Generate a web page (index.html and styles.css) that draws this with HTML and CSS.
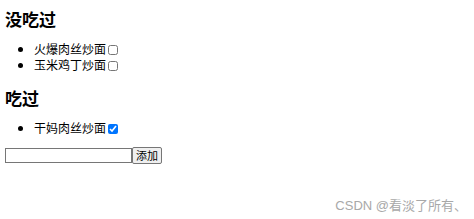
FILE: index.html
```html
<!DOCTYPE html>
<html>
<head>
<meta charset="utf-8">
<link rel="stylesheet" href="styles.css">
</head>
<body>
<div class="page">
  <h2 class="title">没吃过</h2>
  <ul class="list">
    <li>火爆肉丝炒面<input type="checkbox" class="check"></li>
    <li>玉米鸡丁炒面<input type="checkbox" class="check"></li>
  </ul>
  <h2 class="title second">吃过</h2>
  <ul class="list">
    <li>干妈肉丝炒面<input type="checkbox" class="check" checked></li>
  </ul>
  <div class="form">
    <input type="text" class="field"><button class="btn">添加</button>
  </div>
</div>
<div class="watermark">CSDN @看淡了所有、</div>
</body>
</html>
```
FILE: styles.css
```css
html, body {
  margin: 0;
  padding: 0;
  background: #fff;
}
body {
  width: 474px;
  height: 219px;
  position: relative;
  overflow: hidden;
  font-family: "Noto Sans CJK SC", "Noto Sans", sans-serif;
  color: #000;
  font-size: 12px;
}
.page {
  padding: 8px 5px 0;
}
.title {
  font-size: 17px;
  line-height: 22px;
  font-weight: bold;
  margin: 0;
}
.title.second {
  margin-top: 14px;
}
.list {
  margin: 11px 0 0;
  padding-left: 29px;
  list-style: disc;
}
.list li {
  line-height: 16px;
  height: 16px;
}
.check {
  width: 10px;
  height: 10px;
  margin: 0 0 0 2px;
  vertical-align: -1px;
}
.form {
  margin-top: 11px;
  display: flex;
  align-items: center;
}
.field {
  width: 127px;
  height: 15px;
  box-sizing: border-box;
  border: 1px solid #767676;
  margin: 0;
  padding: 0 2px;
  font-size: 12px;
}
.btn {
  height: 17px;
  box-sizing: border-box;
  margin: 0;
  padding: 0 3px;
  font-size: 11px;
  font-family: "Noto Sans CJK SC", sans-serif;
  line-height: 13px;
  border: 1px solid #767676;
  background: #efefef;
  border-radius: 2px;
  color: #000;
}
.watermark {
  position: absolute;
  right: 7px;
  bottom: 5px;
  font-size: 13px;
  color: #a8a8a8;
  font-family: "Liberation Sans", "Noto Sans CJK SC", sans-serif;
}
```
